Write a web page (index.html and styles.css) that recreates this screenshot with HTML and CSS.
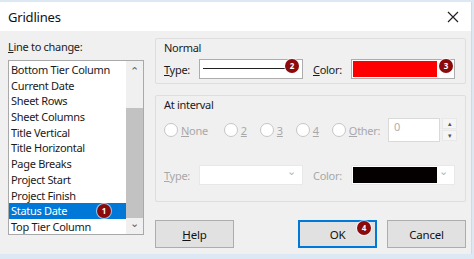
FILE: index.html
```html
<!DOCTYPE html>
<html lang="en">
<head>
    <meta charset="UTF-8">
    <title>Gridlines</title>
    <link rel="stylesheet" href="styles.css">
</head>
<body>
    <div class="window">
        <div class="titlebar">
            <span class="title">Gridlines</span>
            <svg class="close" width="12" height="12" viewBox="0 0 12 12"><path d="M1 1 L11 11 M11 1 L1 11" stroke="#222" stroke-width="1.2" fill="none"/></svg>
        </div>
        <div class="content">
            <div class="left">
                <div class="caption"><u>L</u>ine to change:</div>
                <div class="listbox">
                    <ul class="items">
                        <li>Bottom Tier Column</li>
                        <li>Current Date</li>
                        <li>Sheet Rows</li>
                        <li>Sheet Columns</li>
                        <li>Title Vertical</li>
                        <li>Title Horizontal</li>
                        <li>Page Breaks</li>
                        <li>Project Start</li>
                        <li>Project Finish</li>
                        <li class="selected">Status Date<span class="badge b1">1</span></li>
                        <li>Top Tier Column</li>
                    </ul>
                    <div class="scrollbar">
                        <span class="arrow">&#8963;</span>
                        <div class="track"><div class="thumb"></div></div>
                        <span class="arrow down">&#8964;</span>
                    </div>
                </div>
            </div>
            <div class="right">
                <div class="group normal">
                    <div class="legend">Normal</div>
                    <div class="row">
                        <span class="lbl"><u>T</u>ype:</span>
                        <div class="field linefield"><div class="line"></div><span class="badge b2">2</span></div>
                        <span class="lbl lbl-color"><u>C</u>olor:</span>
                        <div class="field colorfield"><div class="swatch red"></div><span class="badge b3">3</span></div>
                    </div>
                </div>
                <div class="group interval">
                    <div class="legend">At interval</div>
                    <div class="radios">
                        <span class="radio"><i></i><u>N</u>one</span>
                        <span class="radio"><i></i><u>2</u></span>
                        <span class="radio"><i></i><u>3</u></span>
                        <span class="radio"><i></i><u>4</u></span>
                        <span class="radio"><i></i><u>O</u>ther:</span>
                        <div class="spin">
                            <div class="spinbox">0</div>
                            <div class="spinbtns"><span>&#9652;</span><span>&#9662;</span></div>
                        </div>
                    </div>
                    <div class="row dim">
                        <span class="lbl"><u>T</u>ype:</span>
                        <div class="field combo"><span class="chev">&#8964;</span></div>
                        <span class="lbl lbl-color">Color:</span>
                        <div class="field combo"><div class="swatch black"></div><span class="chev">&#8964;</span></div>
                    </div>
                </div>
                <div class="buttons">
                    <button class="btn help"><u>H</u>elp</button>
                    <button class="btn ok">OK<span class="badge b4">4</span></button>
                    <button class="btn">Cancel</button>
                </div>
            </div>
        </div>
    </div>
</body>
</html>
```
FILE: styles.css
```css
body {
    margin: 0;
    font-family: "Noto Sans", "Open Sans", sans-serif;
    font-size: 11px;
    letter-spacing: -0.3px;
    color: #1a1a1a;
    background: #dce9f5;
}
.window {
    width: 471px;
    height: 252px;
    margin-top: 2px;
    background: #f0f0f0;
    border-right: 1px solid #c9dcec;
}
.titlebar {
    height: 29px;
    background: #fff;
    display: flex;
    align-items: center;
    justify-content: space-between;
    padding: 0 12px 0 8px;
}
.title { font-size: 13px; color: #111; letter-spacing: -0.2px; }
.content { display: flex; padding-top: 7px; }
.left { width: 136px; margin-left: 8px; margin-right: 11px; }
.caption { height: 22px; line-height: 17px; color: #222; }
.listbox {
    height: 173px;
    border: 1px solid #a9a9a9;
    background: #fff;
    display: flex;
}
.items {
    list-style: none;
    margin: 0;
    padding: 1px 0 0 0;
    flex: 1;
}
.items li {
    height: 15.7px;
    line-height: 15.7px;
    padding-left: 2px;
    white-space: nowrap;
    position: relative;
}
.items li.selected { background: #0078d7; color: #fff; }
.scrollbar {
    width: 17px;
    background: #f0f0f0;
    display: flex;
    flex-direction: column;
}
.arrow { height: 17px; text-align: center; line-height: 20px; font-size: 11px; color: #606060; }
.arrow.down { line-height: 10px; }
.track { flex: 1; padding-top: 30px; }
.thumb { height: 110px; background: #c2c2c2; }
.right { width: 311px; }
.group {
    border: 1px solid #dedede;
    border-radius: 2px;
    padding: 2px 8px 0 8px;
}
.normal { height: 42px; }
.interval { height: 103px; margin-top: 11px; }
.legend { height: 15px; line-height: 14px; }
.row { display: flex; align-items: center; margin-top: 3px; }
.lbl { width: 35px; }
.lbl-color { width: 38px; margin-left: 10px; }
.dim .lbl { color: #a8a8a8; }
.field {
    position: relative;
    width: 102px;
    height: 18px;
    background: #fff;
    border: 1px solid #adadad;
    display: flex;
    align-items: center;
}
.linefield .line { width: 82px; height: 1px; background: #222; margin-left: 3px; margin-top: -2px; }
.swatch { width: 84px; height: 16px; margin-left: 1px; }
.red { background: #ff0000; }
.black { background: #050000; }
.combo { border-color: #e8e8e8; }
.chev { position: absolute; right: 6px; top: -3px; color: #b5b5b5; font-size: 11px; }
.radios { display: flex; align-items: center; margin-top: 4px; height: 26px; }
.radio { display: flex; align-items: center; color: #a8a8a8; margin-right: 13px; }
.radio i {
    width: 12px;
    height: 12px;
    border: 1px solid #c6c6c6;
    border-radius: 50%;
    background: #fff;
    margin-right: 3px;
}
.radio:first-child { margin-right: 16px; }
.radio:nth-child(5) { margin-right: 8px; }
.spin { display: flex; }
.spinbox {
    width: 45px;
    height: 22px;
    border: 1px solid #dadada;
    background: #fff;
    color: #b0b0b0;
    padding-left: 5px;
    line-height: 16px;
}
.spinbtns { display: flex; flex-direction: column; margin-left: 2px; }
.spinbtns span {
    width: 15px;
    height: 11px;
    margin-bottom: 1px;
    background: #f5f5f5;
    border: 1px solid #e8e8e8;
    font-size: 7px;
    line-height: 10px;
    text-align: center;
    color: #555;
    box-sizing: border-box;
}
.dim { margin-top: 22px; }
.buttons { display: flex; margin-top: 18px; }
.btn {
    position: relative;
    width: 79px;
    height: 28px;
    background: #e1e1e1;
    border: 1px solid #adadad;
    font-family: "Noto Sans", "Open Sans", sans-serif;
    font-size: 11.5px;
    letter-spacing: -0.2px;
    color: #111;
    padding: 0;
}
.help { margin-right: 64px; }
.ok { border: 2px solid #0078d7; margin-right: 10px; }
.badge {
    position: absolute;
    width: 14px;
    height: 14px;
    border-radius: 50%;
    background: #8b0a0a;
    color: #fff;
    font-size: 8px;
    font-weight: bold;
    letter-spacing: 0;
    line-height: 14px;
    text-align: center;
    box-shadow: 0 0 0 1px rgba(255,255,255,0.6);
}
.b1 { left: 88px; top: 1px; }
.b2 { right: 3px; top: -1px; }
.b3 { right: 1px; top: -1px; }
.b4 { right: 4px; top: -1px; }
```
